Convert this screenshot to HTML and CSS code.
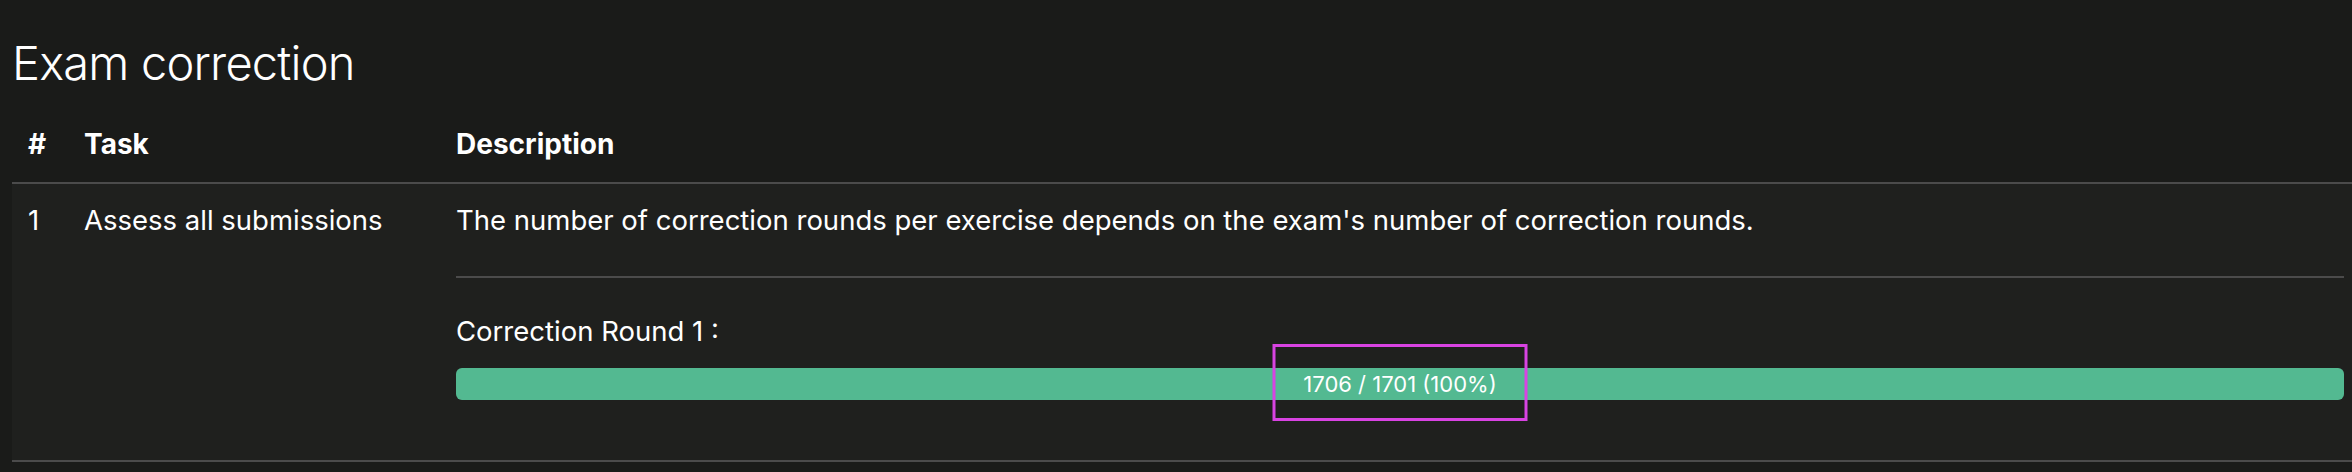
FILE: index.html
```html
<!DOCTYPE html>
<html lang="en">
<head>
<meta charset="utf-8">
<title>Exam correction</title>
<link rel="stylesheet" href="styles.css">
</head>
<body>
<div class="page">
  <h2 class="title">Exam correction</h2>
  <table class="tasks">
    <colgroup>
      <col class="c-num">
      <col class="c-task">
      <col class="c-desc">
    </colgroup>
    <thead>
      <tr>
        <th>#</th>
        <th>Task</th>
        <th>Description</th>
      </tr>
    </thead>
    <tbody>
      <tr>
        <td>1</td>
        <td>Assess all submissions</td>
        <td class="desc">
          <p class="desc-text">The number of correction rounds per exercise depends on the exam's number of correction rounds.</p>
          <hr class="divider">
          <div class="round-label">Correction Round 1 :</div>
          <div class="progress">
            <div class="progress-bar" style="width:100%">1706 / 1701 (100%)</div>
            <div class="highlight"></div>
          </div>
        </td>
      </tr>
    </tbody>
  </table>
</div>
</body>
</html>
```
FILE: styles.css
```css
html, body {
  margin: 0;
  background: #1a1b19;
  color: #ffffff;
  font-family: Inter, "Noto Sans", sans-serif;
}

body {
  height: 472px;
  overflow: hidden;
}

.page {
  padding: 35px 0 0 12px;
}

.title {
  margin: 0 0 13px;
  font-size: 47px;
  font-weight: 300;
  line-height: 56px;
  letter-spacing: -0.8px;
}

.tasks {
  width: 100%;
  border-collapse: collapse;
  table-layout: fixed;
}

.c-num { width: 56px; }
.c-task { width: 372px; }

.tasks th {
  font-size: 28px;
  font-weight: 700;
  line-height: 40px;
  text-align: left;
  padding: 20px 8px 18px 16px;
  border-bottom: 2px solid #4b4b4b;
  vertical-align: bottom;
}

.tasks tbody tr {
  background: #1f201e;
  border-bottom: 2px solid #4b4b4b;
}

.tasks td {
  font-size: 27.5px;
  line-height: 40px;
  padding: 16px 8px 60px 16px;
  vertical-align: top;
}

.desc-text {
  margin: 0;
}

.divider {
  border: 0;
  height: 2px;
  background: #4b4b4b;
  margin: 36px 0 33px;
}

.round-label {
  line-height: 40px;
}

.progress {
  position: relative;
  height: 32px;
  margin-top: 17px;
  background: #2a2b29;
  border-radius: 6px;
}

.progress-bar {
  height: 100%;
  background: #53b991;
  border-radius: 6px;
  color: #ffffff;
  font-size: 22px;
  line-height: 32px;
  text-align: center;
  white-space: nowrap;
}

.highlight {
  position: absolute;
  top: -24px;
  left: 50%;
  width: 255px;
  height: 77px;
  box-sizing: border-box;
  transform: translateX(-50%);
  border: 3px solid #d843e2;
  pointer-events: none;
}
```
